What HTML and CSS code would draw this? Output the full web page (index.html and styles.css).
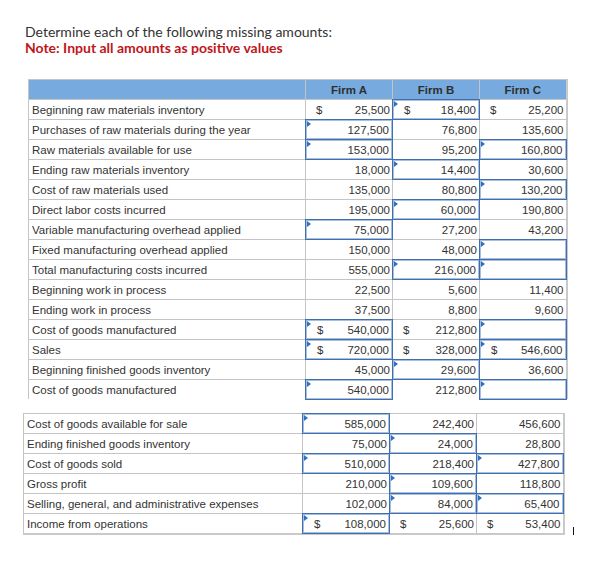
FILE: index.html
```html
<!DOCTYPE html>
<html>
<head>
<meta charset="utf-8">
<link rel="stylesheet" href="styles.css">
</head>
<body>
<div class="page">
  <div class="intro">
    <p class="lead">Determine each of the following missing amounts:</p>
    <p class="note">Note: Input all amounts as positive values</p>
  </div>

  <table class="sheet sheet-top">
    <colgroup><col class="c-label"><col class="c-num"><col class="c-num"><col class="c-num"></colgroup>
    <thead>
      <tr><th></th><th>Firm A</th><th>Firm B</th><th>Firm C</th></tr>
    </thead>
    <tbody>
      <tr><td class="label">Beginning raw materials inventory</td>
        <td><div class="val"><span class="cur">$</span><span>25,500</span></div></td>
        <td><div class="val inp"><span class="cur">$</span><span>18,400</span></div></td>
        <td><div class="val"><span class="cur">$</span><span>25,200</span></div></td></tr>
      <tr><td class="label">Purchases of raw materials during the year</td>
        <td><div class="val inp"><span>127,500</span></div></td>
        <td><div class="val"><span>76,800</span></div></td>
        <td><div class="val"><span>135,600</span></div></td></tr>
      <tr><td class="label">Raw materials available for use</td>
        <td><div class="val inp"><span>153,000</span></div></td>
        <td><div class="val"><span>95,200</span></div></td>
        <td><div class="val inp"><span>160,800</span></div></td></tr>
      <tr><td class="label">Ending raw materials inventory</td>
        <td><div class="val"><span>18,000</span></div></td>
        <td><div class="val inp"><span>14,400</span></div></td>
        <td><div class="val"><span>30,600</span></div></td></tr>
      <tr><td class="label">Cost of raw materials used</td>
        <td><div class="val"><span>135,000</span></div></td>
        <td><div class="val"><span>80,800</span></div></td>
        <td><div class="val inp"><span>130,200</span></div></td></tr>
      <tr><td class="label">Direct labor costs incurred</td>
        <td><div class="val"><span>195,000</span></div></td>
        <td><div class="val inp"><span>60,000</span></div></td>
        <td><div class="val"><span>190,800</span></div></td></tr>
      <tr><td class="label">Variable manufacturing overhead applied</td>
        <td><div class="val inp"><span>75,000</span></div></td>
        <td><div class="val"><span>27,200</span></div></td>
        <td><div class="val"><span>43,200</span></div></td></tr>
      <tr><td class="label">Fixed manufacturing overhead applied</td>
        <td><div class="val"><span>150,000</span></div></td>
        <td><div class="val"><span>48,000</span></div></td>
        <td><div class="val inp"></div></td></tr>
      <tr><td class="label">Total manufacturing costs incurred</td>
        <td><div class="val"><span>555,000</span></div></td>
        <td><div class="val inp"><span>216,000</span></div></td>
        <td><div class="val inp"></div></td></tr>
      <tr><td class="label">Beginning work in process</td>
        <td><div class="val"><span>22,500</span></div></td>
        <td><div class="val"><span>5,600</span></div></td>
        <td><div class="val"><span>11,400</span></div></td></tr>
      <tr><td class="label">Ending work in process</td>
        <td><div class="val"><span>37,500</span></div></td>
        <td><div class="val"><span>8,800</span></div></td>
        <td><div class="val"><span>9,600</span></div></td></tr>
      <tr><td class="label">Cost of goods manufactured</td>
        <td><div class="val inp"><span class="cur">$</span><span>540,000</span></div></td>
        <td><div class="val"><span class="cur">$</span><span>212,800</span></div></td>
        <td><div class="val inp"></div></td></tr>
      <tr><td class="label">Sales</td>
        <td><div class="val inp"><span class="cur">$</span><span>720,000</span></div></td>
        <td><div class="val"><span class="cur">$</span><span>328,000</span></div></td>
        <td><div class="val inp"><span class="cur">$</span><span>546,600</span></div></td></tr>
      <tr><td class="label">Beginning finished goods inventory</td>
        <td><div class="val"><span>45,000</span></div></td>
        <td><div class="val inp"><span>29,600</span></div></td>
        <td><div class="val"><span>36,600</span></div></td></tr>
      <tr class="last"><td class="label">Cost of goods manufactured</td>
        <td><div class="val inp"><span>540,000</span></div></td>
        <td><div class="val"><span>212,800</span></div></td>
        <td><div class="val inp"></div></td></tr>
    </tbody>
  </table>

  <div class="bottom-row">
    <table class="sheet sheet-bottom">
      <colgroup><col class="c-label2"><col class="c-num"><col class="c-num"><col class="c-num"></colgroup>
      <tbody>
        <tr><td class="label">Cost of goods available for sale</td>
          <td><div class="val inp"><span>585,000</span></div></td>
          <td><div class="val"><span>242,400</span></div></td>
          <td><div class="val"><span>456,600</span></div></td></tr>
        <tr><td class="label">Ending finished goods inventory</td>
          <td><div class="val"><span>75,000</span></div></td>
          <td><div class="val inp"><span>24,000</span></div></td>
          <td><div class="val"><span>28,800</span></div></td></tr>
        <tr><td class="label">Cost of goods sold</td>
          <td><div class="val inp"><span>510,000</span></div></td>
          <td><div class="val"><span>218,400</span></div></td>
          <td><div class="val inp"><span>427,800</span></div></td></tr>
        <tr><td class="label">Gross profit</td>
          <td><div class="val"><span>210,000</span></div></td>
          <td><div class="val inp"><span>109,600</span></div></td>
          <td><div class="val"><span>118,800</span></div></td></tr>
        <tr><td class="label">Selling, general, and administrative expenses</td>
          <td><div class="val"><span>102,000</span></div></td>
          <td><div class="val inp"><span>84,000</span></div></td>
          <td><div class="val inp"><span>65,400</span></div></td></tr>
        <tr><td class="label">Income from operations</td>
          <td><div class="val inp"><span class="cur">$</span><span>108,000</span></div></td>
          <td><div class="val"><span class="cur">$</span><span>25,600</span></div></td>
          <td><div class="val"><span class="cur">$</span><span>53,400</span></div></td></tr>
      </tbody>
    </table>
    <span class="caret"></span>
  </div>
</div>
</body>
</html>
```

FILE: styles.css
```css
html, body {
  margin: 0;
  padding: 0;
  background: #ffffff;
}

.page {
  padding: 24px 0 0 0;
}

.intro {
  padding-left: 25px;
  font-family: Lato, "Open Sans", "Liberation Sans", sans-serif;
  font-size: 14px;
  line-height: 16px;
}

.intro p {
  margin: 0;
}

.lead {
  color: #333333;
}

.note {
  color: #c0161b;
  font-weight: 700;
}

.sheet {
  border-collapse: collapse;
  table-layout: fixed;
  font-family: "Liberation Sans", Arial, sans-serif;
  font-size: 11.5px;
  color: #333333;
}

.sheet-top {
  margin: 23px 0 0 28px;
  width: 539px;
  border-right: 2px solid #c9c9c9;
}

.c-label { width: 277px; }
.c-label2 { width: 279px; }
.c-num { width: 87px; }

.sheet th {
  background: #77abe0;
  height: 19px;
  padding: 0;
  font-weight: 700;
  text-align: center;
  border: 1px solid #c4c4c4;
  color: #2f2f2f;
}

.sheet td {
  height: 19px;
  padding: 0;
  border: 1px solid #c4c4c4;
  white-space: nowrap;
}

.sheet-top tr.last td {
  border-bottom: none;
}

.sheet td.label {
  padding-left: 3px;
}

.val {
  display: flex;
  justify-content: flex-end;
  align-items: center;
  height: 19px;
  padding: 0 2px 0 10px;
  box-sizing: border-box;
}

.val .cur {
  margin-right: auto;
}

.inp {
  position: relative;
  z-index: 1;
  height: 21px;
  margin: -1px;
  padding: 0 3px 0 11px;
  border: 1px solid #3f6fb0;
  box-shadow: inset 0 0 0 1px rgba(63, 111, 176, 0.45);
  background: #ffffff;
}

.inp::before {
  content: "";
  position: absolute;
  left: 1px;
  top: 1px;
  width: 0;
  height: 0;
  border-left: 4px solid #2f6fc0;
  border-top: 3px solid transparent;
  border-bottom: 3px solid transparent;
}

.bottom-row {
  display: flex;
  align-items: flex-end;
  margin: 14px 0 0 23px;
}

.sheet-bottom {
  width: 541px;
  border-right: 2px solid #c9c9c9;
  border-bottom: 2px solid #c9c9c9;
}

.caret {
  display: block;
  width: 1px;
  height: 12px;
  background: #111111;
  margin: 0 0 -4px 8px;
}
```
